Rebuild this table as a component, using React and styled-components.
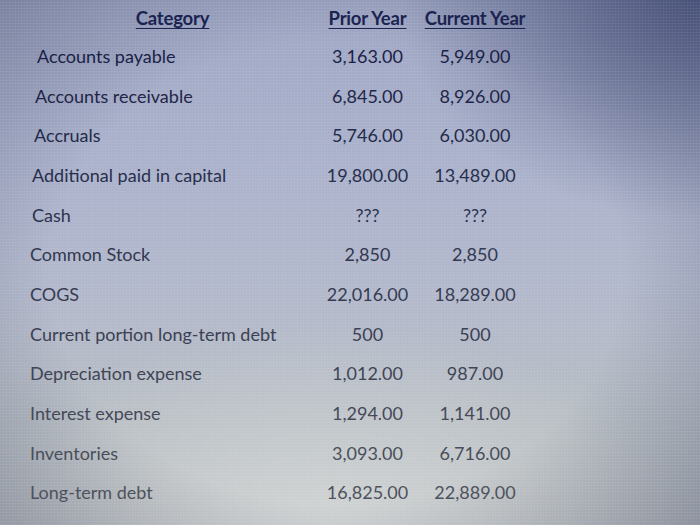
import React from 'react';
import styled, { createGlobalStyle } from 'styled-components';

const GlobalStyle = createGlobalStyle`
  html, body {
    margin: 0;
    padding: 0;
  }
  body {
    width: 700px;
    height: 525px;
    overflow: hidden;
  }
`;

const Screen = styled.div`
  width: 700px;
  height: 525px;
  box-sizing: border-box;
  font-family: Lato, "Open Sans", sans-serif;
  background:
    repeating-linear-gradient(0deg, rgba(255, 255, 255, 0.06) 0 1px, transparent 1px 3px),
    repeating-linear-gradient(90deg, rgba(255, 255, 255, 0.04) 0 1px, transparent 1px 3px),
    radial-gradient(ellipse 300px 220px at 700px 0px, rgba(40, 50, 95, 0.6), transparent),
    radial-gradient(ellipse 520px 420px at 48% 52%, transparent 55%, rgba(60, 68, 100, 0.45) 100%),
    radial-gradient(ellipse 360px 200px at 330px 525px, rgba(225, 228, 228, 0.55), transparent),
    linear-gradient(180deg, #9ea6c4 0%, #aab1cb 30%, #b2b8cb 55%, #b6bcc2 80%, #bcc0c0 100%);
`;

const Table = styled.div`
  display: grid;
  grid-template-columns: 285px 105px 110px;
  grid-auto-rows: 39.7px;
  grid-template-rows: 36px;
  padding-left: 30px;
`;

const HeadCell = styled.div`
  display: flex;
  align-items: center;
  justify-content: center;
  font-weight: 700;
  font-size: 18.5px;
  letter-spacing: -0.2px;
  color: #1b2350;
  text-decoration: underline;
  text-underline-offset: 3px;
`;

const NameCell = styled.div`
  display: flex;
  align-items: center;
  padding-left: ${(p) => p.$indent}px;
  font-size: 18px;
  color: ${(p) => p.$color};
`;

const NumCell = styled.div`
  display: flex;
  align-items: center;
  justify-content: center;
  font-size: 18px;
  color: ${(p) => p.$color};
`;

const rows = [
  ['Accounts payable', '3,163.00', '5,949.00', 7],
  ['Accounts receivable', '6,845.00', '8,926.00', 5],
  ['Accruals', '5,746.00', '6,030.00', 4],
  ['Additional paid in capital', '19,800.00', '13,489.00', 2],
  ['Cash', '???', '???', 2],
  ['Common Stock', '2,850', '2,850', 0],
  ['COGS', '22,016.00', '18,289.00', 0],
  ['Current portion long-term debt', '500', '500', -2],
  ['Depreciation expense', '1,012.00', '987.00', -6],
  ['Interest expense', '1,294.00', '1,141.00', -8],
  ['Inventories', '3,093.00', '6,716.00', -6],
  ['Long-term debt', '16,825.00', '22,889.00', -6],
];

// text fades from navy at the top to grey at the bottom of the photo
const tone = (i) => {
  const t = i / (rows.length - 1);
  const mix = (a, b) => Math.round(a + (b - a) * t);
  return `rgb(${mix(26, 78)}, ${mix(34, 82)}, ${mix(70, 92)})`;
};

export default function App() {
  return (
    <Screen>
      <GlobalStyle />
      <Table>
        <HeadCell>Category</HeadCell>
        <HeadCell>Prior Year</HeadCell>
        <HeadCell>Current Year</HeadCell>
        {rows.map(([name, prior, current, indent], i) => (
          <React.Fragment key={name}>
            <NameCell $indent={indent} $color={tone(i)}>{name}</NameCell>
            <NumCell $color={tone(i)}>{prior}</NumCell>
            <NumCell $color={tone(i)}>{current}</NumCell>
          </React.Fragment>
        ))}
      </Table>
    </Screen>
  );
}
